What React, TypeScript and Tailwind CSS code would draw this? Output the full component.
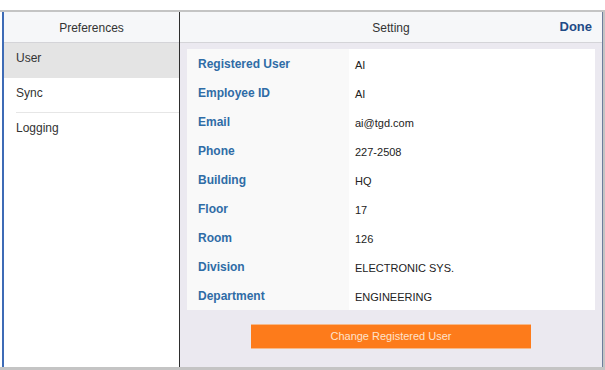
const rows: [string, string][] = [
  ["Registered User", "AI"],
  ["Employee ID", "AI"],
  ["Email", "ai@tgd.com"],
  ["Phone", "227-2508"],
  ["Building", "HQ"],
  ["Floor", "17"],
  ["Room", "126"],
  ["Division", "ELECTRONIC SYS."],
  ["Department", "ENGINEERING"],
];

export default function App() {
  return (
    <div className="flex h-[370px] w-[605px] flex-col bg-white pt-[10px] font-['Liberation_Sans',Arial,sans-serif]">
      <div className="flex flex-1 border-b-[3px] border-r-2 border-t-2 border-[#c4c4c4] bg-white pl-[2px]">
        <div className="flex flex-1 border-l-2 border-r border-l-[#3d6bb6] border-r-[#6d7d9c]">
          {/* left: preferences list */}
          <div className="flex w-[176px] flex-col border-r border-[#2e2e2e] bg-white">
            <div className="flex h-[31px] items-center justify-center border-b border-[#d4d4d8] bg-[#f6f7f9] pt-px text-[12px] text-[#333]">
              Preferences
            </div>
            <div className="h-[35px] bg-[#e4e4e4] pl-[12px] pt-[6px] text-[12px] text-[#333]">User</div>
            <div className="h-[34px] pl-[12px] pt-[6px] text-[12px] text-[#333]">Sync</div>
            <div className="ml-[12px] h-px bg-[#e6e6e6]" />
            <div className="h-[34px] pl-[12px] pt-[6px] text-[12px] text-[#333]">Logging</div>
          </div>
          {/* right: setting */}
          <div className="flex flex-1 flex-col bg-[#ebe9f0]">
            <div className="relative flex h-[31px] items-center justify-center border-b border-[#d4d4d8] bg-[#f6f7f9] pt-px text-[12px] text-[#333]">
              Setting
              <span className="absolute right-[10px] top-[5px] text-[13px] font-bold text-[#1f4a86]">Done</span>
            </div>
            <div className="mx-[7px] mt-[6px] flex flex-col bg-white">
              {rows.map(([k, v]) => (
                <div key={k} className="flex h-[29px] items-center">
                  <div className="flex h-full w-[162px] items-center bg-[#f9f9f9] pl-[11px] pt-px text-[12px] font-bold text-[#2f6ca6]">
                    {k}
                  </div>
                  <div className="pl-[6px] pt-[3px] text-[11px] text-[#222]">{v}</div>
                </div>
              ))}
            </div>
            <div className="mt-[14px] flex justify-center">
              <button className="h-[25px] w-[280px] border-y border-[#f6b98a] bg-[#fd7b1b] text-[11px] text-[#fde3cc]">
                Change Registered User
              </button>
            </div>
          </div>
        </div>
      </div>
    </div>
  );
}
